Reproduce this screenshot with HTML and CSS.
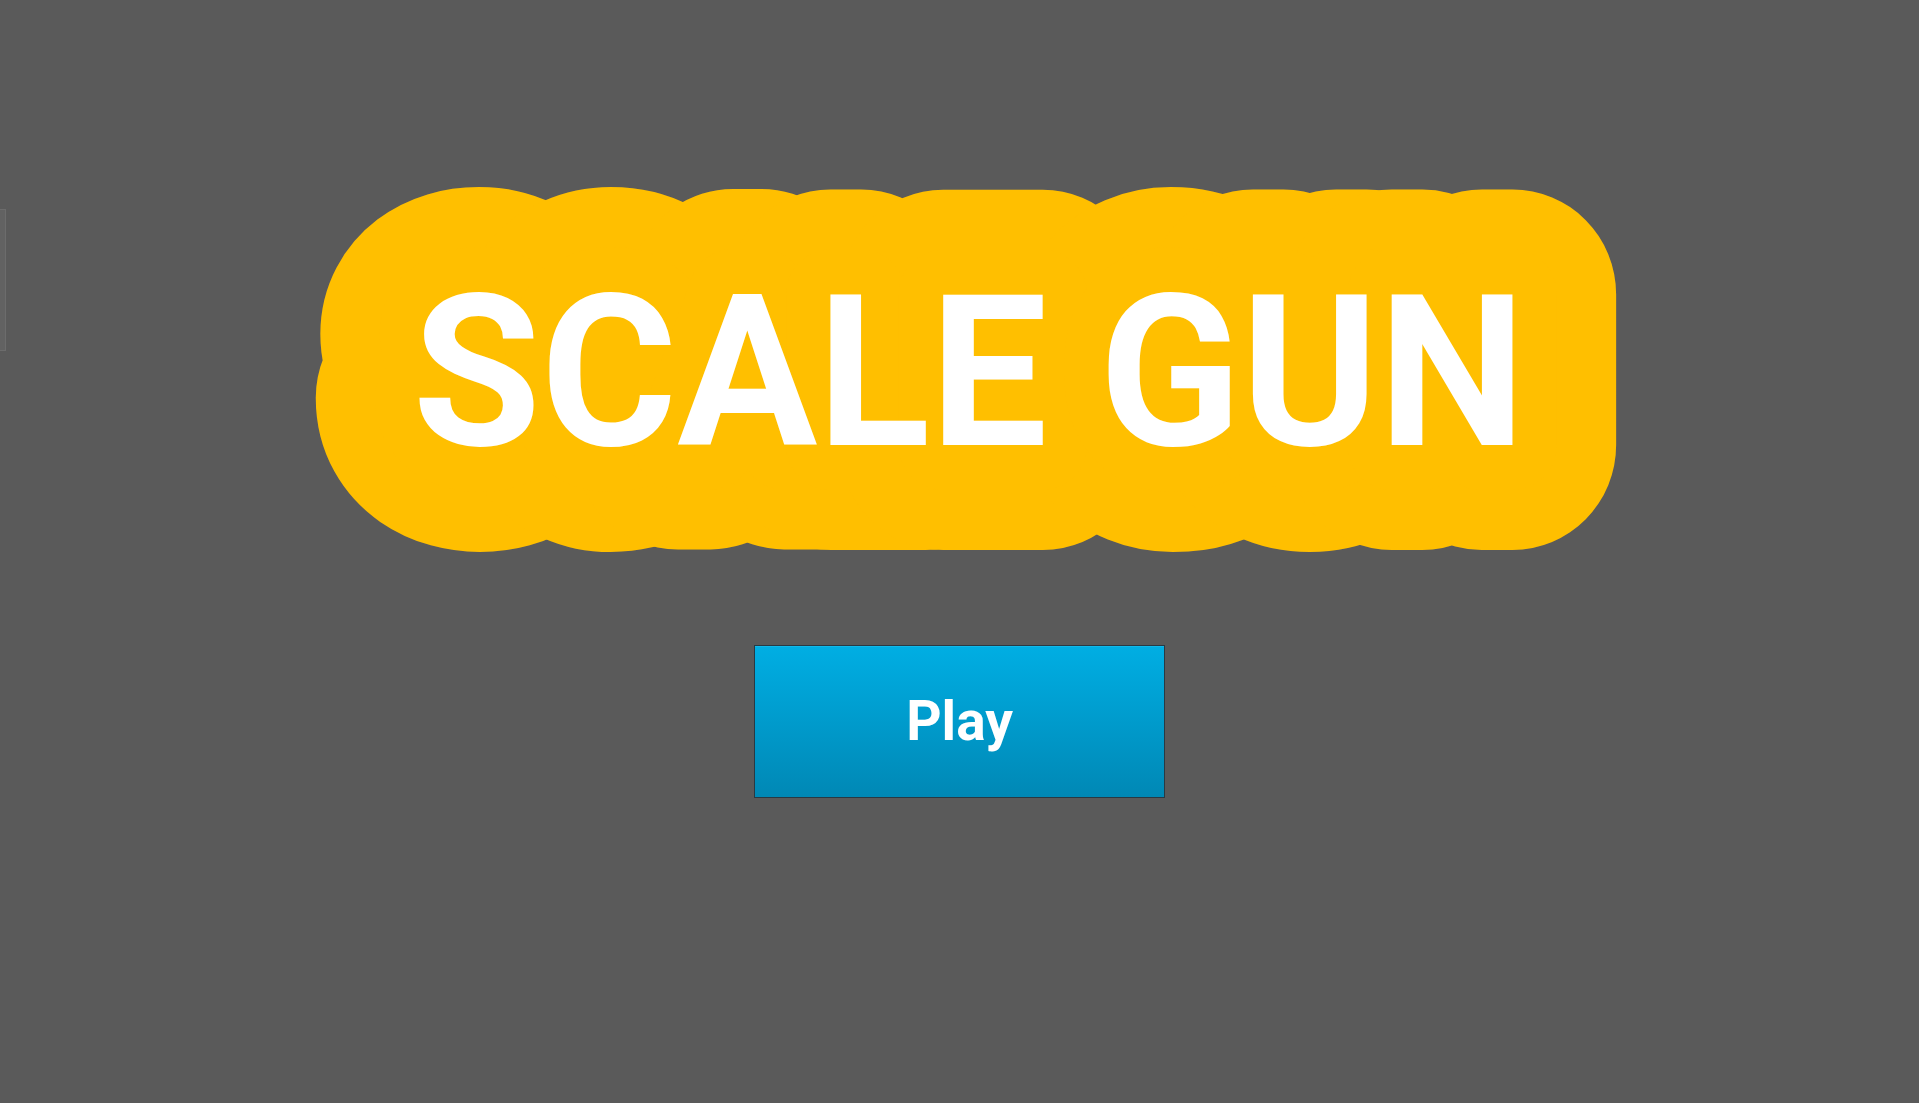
FILE: index.html
```html
<!DOCTYPE html>
<html lang="en">
<head>
    <meta charset="UTF-8">
    <meta name="viewport" content="width=device-width, initial-scale=1.0">
    <title>Scale Gun</title>
    <link rel="stylesheet" href="styles.css">
</head>
<body>

<!-- side drawer handle -->
<div class="side-handle"></div>

<div class="menu">
    <svg class="title" width="1320" height="380" viewBox="0 0 1320 380">
        <g transform="translate(660 0) scale(0.988 1)">
            <text x="0" y="265" text-anchor="middle" class="title-text outline-wide">SCALE GUN</text>
            <text x="0" y="265" text-anchor="middle" class="title-text outline-narrow">SCALE GUN</text>
            <text x="0" y="265" text-anchor="middle" class="title-text">SCALE GUN</text>
        </g>
    </svg>

    <button class="play-btn" onclick="startGame()">Play</button>
</div>

<script>
    function startGame() {
        document.querySelector('.play-btn').blur();
    }
</script>

</body>
</html>
```

FILE: styles.css
```css
html, body {
    height: 100%;
}

body {
    margin: 0;
    padding: 0;
    background-color: #5a5a5a;
    font-family: 'Roboto', 'Liberation Sans', sans-serif;
    overflow: hidden;
}

.side-handle {
    position: fixed;
    left: 0;
    top: 209px;
    width: 5px;
    height: 140px;
    background-color: #626262;
    border: 1px solid #6c6c6c;
    border-left: none;
}

.menu {
    display: flex;
    flex-direction: column;
    align-items: center;
}

.title {
    display: block;
    margin-top: 180px;
    margin-left: 18px;
    overflow: visible;
}

.title-text {
    font-family: 'Roboto', 'Liberation Sans', sans-serif;
    font-weight: 700;
    font-size: 211px;
    fill: #ffffff;
}

.outline-wide,
.outline-narrow {
    fill: #ffbf00;
    stroke: #ffbf00;
    stroke-linejoin: round;
    stroke-linecap: round;
}

.outline-wide {
    stroke-width: 210px;
}

.outline-narrow {
    stroke-width: 90px;
}

.play-btn {
    margin-top: 85px;
    width: 411px;
    height: 153px;
    border: 1px solid #283a44;
    background: linear-gradient(to bottom, #00aee3, #0088b5);
    box-shadow: inset 0 1px 0 #10b8ea;
    color: #ffffff;
    font-family: 'Roboto', 'Liberation Sans', sans-serif;
    font-weight: 700;
    font-size: 55px;
    cursor: pointer;
    padding: 0 0 2px 0;
}

.play-btn:hover {
    background: linear-gradient(to bottom, #10b8ec, #0092c2);
}
```
